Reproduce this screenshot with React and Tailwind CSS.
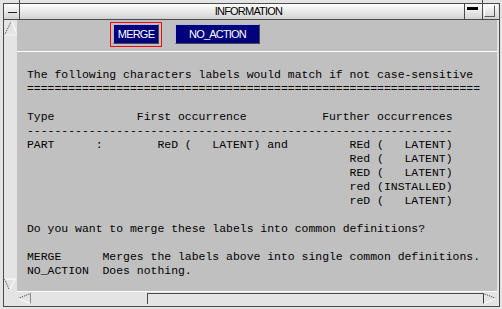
import React from "react";

const pad = (n) => " ".repeat(n);

// report text, laid out on a fixed monospace grid
const reportLines = [
  "The following characters labels would match if not case-sensitive",
  "=".repeat(66),
  "",
  "Type" + pad(12) + "First occurrence" + pad(11) + "Further occurrences",
  "-".repeat(62),
  "PART" + pad(6) + ":" + pad(8) + "ReD (   LATENT) and" + pad(9) + "REd (   LATENT)",
  pad(47) + "Red (   LATENT)",
  pad(47) + "RED (   LATENT)",
  pad(47) + "red (INSTALLED)",
  pad(47) + "reD (   LATENT)",
  "",
  "Do you want to merge these labels into common definitions?",
  "",
  "MERGE" + pad(6) + "Merges the labels above into single common definitions.",
  "NO_ACTION" + pad(2) + "Does nothing.",
];

const Triangle = ({dir}) => {
  // little dotted resize handles drawn in the window frame
  if (dir === "up")
    return (
      <svg width="13" height="16" className="block">
        <line x1="7.5" y1="1" x2="0.5" y2="15" stroke="#3a3a3a" strokeDasharray="1 1" />
        <line x1="7.5" y1="1" x2="12.5" y2="13" stroke="#ffffff" />
        <line x1="0.5" y1="15" x2="13" y2="15" stroke="#f4f4f4" />
      </svg>
    );
  if (dir === "down")
    return (
      <svg width="13" height="13" className="block">
        <line x1="0.5" y1="1" x2="5.5" y2="12" stroke="#3a3a3a" strokeDasharray="1 1" />
        <line x1="0.5" y1="1" x2="11.5" y2="1" stroke="#ffffff" />
        <line x1="11.5" y1="1" x2="5.5" y2="12" stroke="#ffffff" />
      </svg>
    );
  if (dir === "left")
    return (
      <svg width="14" height="11" className="block">
        <line x1="13.5" y1="0.5" x2="1" y2="5.5" stroke="#3a3a3a" strokeDasharray="1 1" />
        <line x1="1" y1="5.5" x2="13.5" y2="10.5" stroke="#ffffff" />
        <line x1="13.5" y1="0.5" x2="13.5" y2="10.5" stroke="#8a8a8a" />
      </svg>
    );
  return (
    <svg width="14" height="11" className="block">
      <line x1="0.5" y1="0.5" x2="13" y2="5.5" stroke="#3a3a3a" strokeDasharray="1 1" />
      <line x1="13" y1="5.5" x2="0.5" y2="10.5" stroke="#ffffff" />
      <line x1="0.5" y1="0.5" x2="0.5" y2="10.5" stroke="#3a3a3a" />
    </svg>
  );
};

const NavyButton = ({label, width}) => (
  <div
    className={`${width} h-[20px] flex items-center justify-center bg-[#00007f] border border-t-[#b8b8d8] border-l-[#b8b8d8] border-b-[#4a4a4a] border-r-[#4a4a4a] text-white text-[11px] tracking-[-0.8px] leading-none`}
    style={{fontFamily: '"Liberation Sans", Arial, sans-serif'}}
  >
    {label}
  </div>
);

export default function App() {
  return (
    <div
      className="w-[502px] h-[309px] bg-[#e4e4e4] flex flex-col overflow-hidden"
      style={{fontFamily: '"Liberation Sans", Arial, sans-serif'}}
    >
      {/* top frame edge with corner ticks */}
      <div className="h-[3px] flex shrink-0">
        <div className="w-[19px]" />
        <div className="w-px bg-[#4a4a4a]" />
        <div className="w-[462px]" />
        <div className="w-px bg-[#4a4a4a]" />
      </div>

      <div className="flex flex-1 min-h-0">
        <div className="w-[3px]" />

        {/* window body */}
        <div className="w-[497px] h-[304px] flex flex-col border border-[#4a4a4a]">
          {/* title bar */}
          <div className="h-[15px] flex shrink-0">
            <div className="w-[15px] bg-gradient-to-b from-[#ffffff] to-[#d2d2d2] flex items-center justify-center">
              <div className="w-[9px] h-px bg-[#1e1e1e] mt-[2px] ml-[1px]" />
            </div>
            <div className="flex-1 border-l border-r border-[#4a4a4a] bg-gradient-to-b from-[#ffffff] to-[#d2d2d2] flex items-center justify-center pl-[13px] text-[11px] tracking-[-0.8px] leading-none text-black">
              INFORMATION
            </div>
            <div className="w-[15px] border-r border-[#4a4a4a] bg-gradient-to-b from-[#ffffff] to-[#d2d2d2] box-content pt-[3px] pl-[2px] pr-0">
              <div className="w-[11px] h-[3px] bg-black" />
            </div>
            <div className="w-[15px] bg-gradient-to-b from-[#ffffff] to-[#d2d2d2] pt-[1px] pl-[1px]">
              <div className="w-[11px] h-[12px] border border-t-[#ffffff] border-l-[#ffffff] border-b-[#5a5a5a] border-r-[#5a5a5a]" />
            </div>
            <div className="w-px" />
          </div>
          <div className="h-px bg-[#4a4a4a] shrink-0" />

          {/* main area */}
          <div className="h-[271px] flex shrink-0">
            <div className="w-[13px] flex flex-col justify-between">
              <Triangle dir="up" />
              <Triangle dir="down" />
            </div>

            <div className="w-[480px] bg-[#c0c0c0] flex flex-col">
              {/* button bar */}
              <div className="h-[31px] flex items-start shrink-0">
                <div className="ml-[93px] mt-[2px] border border-[#ff0000] pt-px pb-[2px] px-[2px]">
                  <NavyButton label="MERGE" width="w-[46px]" />
                </div>
                <div className="ml-[13px] mt-[4px]">
                  <NavyButton label="NO_ACTION" width="w-[85px]" />
                </div>
              </div>
              <div className="h-px bg-white shrink-0" />

              {/* report */}
              <div
                className="pt-[16px] pl-[10px] text-[11.45px] leading-[14px] text-black whitespace-pre"
                style={{fontFamily: '"Liberation Mono", "Courier New", monospace'}}
              >
                {reportLines.map((line, i) => (
                  <div key={i} className="h-[14px]">
                    {line}
                  </div>
                ))}
              </div>
            </div>

            <div className="w-[2px]" />
          </div>

          {/* bottom frame strip */}
          <div className="h-[15px] flex shrink-0">
            <div className="w-[13px]" />
            <div className="w-[480px] flex flex-col">
              <div className="h-px bg-white" />
              <div className="flex mt-px">
                <div className="w-[130px] flex">
                  <Triangle dir="left" />
                </div>
                <div className="w-[336px] h-[11px] border-t border-l border-[#4a4a4a]" />
                <Triangle dir="right" />
              </div>
            </div>
            <div className="w-[2px]" />
          </div>
        </div>

        <div className="w-[2px]" />
      </div>
    </div>
  );
}
